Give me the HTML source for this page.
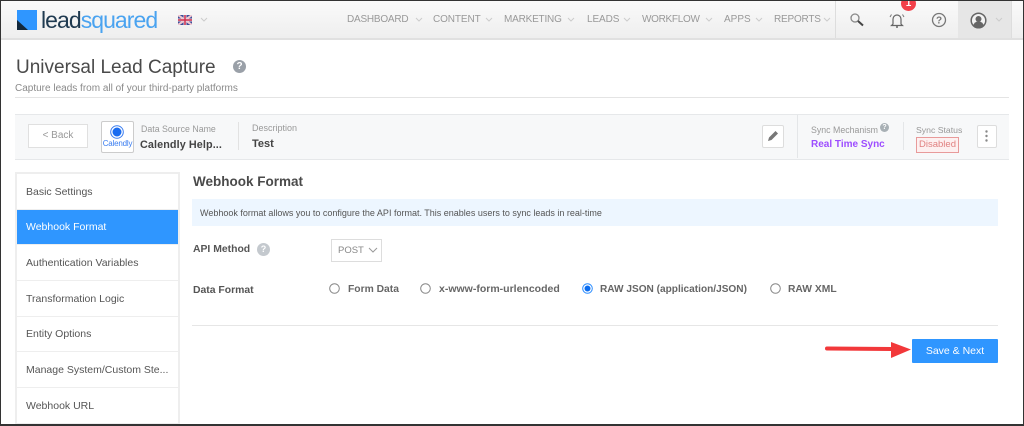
<!DOCTYPE html>
<html><head><meta charset="utf-8"><style>
html,body{margin:0;padding:0;background:#fff}
body{width:1024px;height:426px;position:relative;overflow:hidden;font-family:"Liberation Sans",sans-serif;color:#444}
#w{position:absolute;left:0;top:0;width:1024px;height:426px;overflow:hidden;filter:blur(.3px)}
.a{position:absolute;white-space:nowrap}
.nav{top:13px;font-size:10px;color:#999;line-height:13px}
.side{position:absolute;left:17px;width:161px;background:#fff;font-size:10.5px;color:#555;text-indent:9px}
.l{top:283px;font-size:10.3px;line-height:13px;font-weight:bold;color:#666}
</style></head><body><div id="w">
<div class="a" style="left:0;top:0;width:1024px;height:38px;background:linear-gradient(#fafafa,#eee);border-bottom:2px solid #e0e0e0"></div>
<svg class="a" style="left:17px;top:10px" width="20" height="20"><rect width="20" height="20" fill="#2f96ff"/><path d="M0 10L11 20H0Z" fill="#13283c"/></svg>
<div class="a" style="left:41px;top:6px;font-size:23px;line-height:28px;color:#1f3a50;letter-spacing:-.95px">lead<span style="color:#4aa3f0">squared</span></div>
<svg class="a" style="left:178px;top:15px" width="14" height="10"><rect width="14" height="10" fill="#3d4f9a"/><path d="M0 0L14 10M14 0L0 10" stroke="#f0c8d0" stroke-width="2"/><path d="M7 0V10M0 5H14" stroke="#e6d0d8" stroke-width="3"/><path d="M7 0V10M0 5H14" stroke="#d03050" stroke-width="1.5"/></svg>
<svg class="a" style="left:200px;top:17px" width="8" height="6"><path d="M1 1L4 4L7 1" fill="none" stroke="#ccc"/></svg>
<div class="a nav" style="left:347px;letter-spacing:-.22px">DASHBOARD</div><svg class="a" style="left:415px;top:17px" width="8" height="6"><path d="M1 1L4 4L7 1" fill="none" stroke="#ccc"/></svg>
<div class="a nav" style="left:433px;letter-spacing:-.1px">CONTENT</div><svg class="a" style="left:485px;top:17px" width="8" height="6"><path d="M1 1L4 4L7 1" fill="none" stroke="#ccc"/></svg>
<div class="a nav" style="left:504px;letter-spacing:-.2px">MARKETING</div><svg class="a" style="left:567px;top:17px" width="8" height="6"><path d="M1 1L4 4L7 1" fill="none" stroke="#ccc"/></svg>
<div class="a nav" style="left:587px;letter-spacing:-.1px">LEADS</div><svg class="a" style="left:623px;top:17px" width="8" height="6"><path d="M1 1L4 4L7 1" fill="none" stroke="#ccc"/></svg>
<div class="a nav" style="left:642px;letter-spacing:-.3px">WORKFLOW</div><svg class="a" style="left:705px;top:17px" width="8" height="6"><path d="M1 1L4 4L7 1" fill="none" stroke="#ccc"/></svg>
<div class="a nav" style="left:724px">APPS</div><svg class="a" style="left:755px;top:17px" width="8" height="6"><path d="M1 1L4 4L7 1" fill="none" stroke="#ccc"/></svg>
<div class="a nav" style="left:774px;letter-spacing:-.2px">REPORTS</div><svg class="a" style="left:823px;top:17px" width="8" height="6"><path d="M1 1L4 4L7 1" fill="none" stroke="#ccc"/></svg>
<div class="a" style="left:835px;top:1px;width:1px;height:37px;background:#ddd"></div>
<svg class="a" style="left:849px;top:12px" width="16" height="16"><circle cx="6" cy="6" r="4" fill="none" stroke="#888" stroke-width="1.3"/><path d="M9 9L14 13.5" stroke="#444" stroke-width="2"/></svg>
<svg class="a" style="left:889px;top:11px" width="16" height="18"><path d="M4 13V8a4 4 0 0 1 8 0V13L13.5 14.500H2.500Z" fill="none" stroke="#666" stroke-width="1.200"/><path d="M7 16H9" stroke="#666" stroke-width="1.500"/><path d="M2.500 3.500L1 6M13.500 3.500L15 6" stroke="#777"/></svg>
<div class="a" style="left:901px;top:-4px;width:15px;height:15px;border-radius:8px;background:#f2404a;color:#fff;font-size:10px;font-weight:bold;line-height:15px;text-align:center">1</div>
<svg class="a" style="left:931px;top:12px" width="16" height="16"><circle cx="8" cy="8" r="6.500" fill="none" stroke="#777" stroke-width="1.300"/><text x="8" y="11.500" font-family="Liberation Sans" font-size="10" font-weight="bold" fill="#777" text-anchor="middle">?</text></svg>
<div class="a" style="left:958px;top:1px;width:53px;height:37px;background:#e6e6e6;border-right:1px solid #ddd"></div>
<svg class="a" style="left:970px;top:12px" width="17" height="17"><circle cx="8.500" cy="8.500" r="7.300" fill="#f3f3f3" stroke="#666" stroke-width="1.500"/><circle cx="8.500" cy="7" r="3" fill="#666"/><path d="M3.500 13.500a5 4 0 0 1 10 0a7 7 0 0 1-10 0Z" fill="#666"/></svg>
<svg class="a" style="left:995px;top:17px" width="8" height="6"><path d="M1 1L4 4L7 1" fill="none" stroke="#ccc"/></svg>

<div class="a" style="left:16px;top:57px;font-size:19px;line-height:22px;color:#4a4a4a">Universal Lead Capture</div>
<div class="a" style="left:233px;top:60px;width:13px;height:13px;border-radius:7px;background:#9aa0a8;color:#fff;font-size:10px;font-weight:bold;line-height:13px;text-align:center">?</div>
<div class="a" style="left:15px;top:83px;font-size:10px;line-height:12px;color:#8a8a8a">Capture leads from all of your third-party platforms</div>
<div class="a" style="left:15px;top:97px;width:994px;height:1px;background:#e4e4e4"></div>

<div class="a" style="left:15px;top:114px;width:994px;height:44px;background:#f7f8f9;border-top:1px solid #e6e8ea;border-bottom:1px solid #e6e8ea"></div>
<div class="a" style="left:28px;top:124px;width:58px;height:22px;background:#fff;border:1px solid #e0e0e0;font-size:10px;line-height:22px;color:#999;text-align:center">&lt; Back</div>
<div class="a" style="left:101px;top:121px;width:31px;height:30px;background:#fff;border:1px solid #ccc;border-radius:2px"></div>
<svg class="a" style="left:110px;top:125px" width="14" height="14"><circle cx="7" cy="7" r="6.300" fill="none" stroke="#3a7df0" stroke-width="1"/><circle cx="7" cy="7" r="4.500" fill="#1a6cf0"/></svg>
<div class="a" style="left:102px;top:139px;width:31px;text-align:center;font-size:8px;line-height:9px;color:#3a7df0;letter-spacing:-.2px">Calendly</div>
<div class="a" style="left:141px;top:124px;font-size:8.800px;line-height:11px;color:#999">Data Source Name</div>
<div class="a" style="left:140px;top:138px;font-size:10.800px;line-height:14px;font-weight:bold;color:#444;letter-spacing:.1px">Calendly Help...</div>
<div class="a" style="left:238px;top:122px;width:1px;height:28px;background:#e2e2e2"></div>
<div class="a" style="left:252px;top:123px;font-size:9px;line-height:11px;color:#999">Description</div>
<div class="a" style="left:252px;top:137px;font-size:11px;line-height:14px;font-weight:bold;color:#444">Test</div>
<div class="a" style="left:762px;top:125px;width:20px;height:21px;background:#fff;border:1px solid #ddd;border-radius:2px"></div>
<svg class="a" style="left:766px;top:129px" width="14" height="14"><path d="M2 12L3 8.500L9.500 2L12 4.500L5.500 11Z" fill="#777"/></svg>
<div class="a" style="left:797px;top:115px;width:1px;height:43px;background:#e4e6e8"></div>
<div class="a" style="left:811px;top:125px;font-size:8.800px;line-height:11px;color:#999">Sync Mechanism</div>
<div class="a" style="left:880px;top:123px;width:9px;height:9px;border-radius:5px;background:#a8b0b5;color:#fff;font-size:7px;font-weight:bold;line-height:9px;text-align:center">?</div>
<div class="a" style="left:811px;top:138px;font-size:10px;line-height:14px;font-weight:bold;color:#9d4dff">Real Time Sync</div>
<div class="a" style="left:903px;top:122px;width:1px;height:28px;background:#e4e6e8"></div>
<div class="a" style="left:916px;top:125px;font-size:8.700px;line-height:11px;color:#999">Sync Status</div>
<div class="a" style="left:916px;top:137px;width:41px;height:14px;background:#fdf0f0;border:1px solid #e89a9a;font-size:9.500px;line-height:14px;color:#e08080;text-align:center">Disabled</div>
<div class="a" style="left:977px;top:125px;width:18px;height:21px;background:#fff;border:1px solid #ddd;border-radius:2px"></div>
<svg class="a" style="left:984px;top:129px" width="5" height="15"><circle cx="2.500" cy="2.500" r="1.200" fill="#888"/><circle cx="2.500" cy="7" r="1.200" fill="#888"/><circle cx="2.500" cy="11.500" r="1.200" fill="#888"/></svg>

<div class="a" style="left:15px;top:172px;width:165px;height:254px;background:#eee"></div>
<div class="side" style="top:174px;height:35px;line-height:36px">Basic Settings</div>
<div class="side" style="top:210px;height:34px;line-height:35px;background:#2f96ff;color:#fff">Webhook Format</div>
<div class="side" style="top:245px;height:35px;line-height:36px">Authentication Variables</div>
<div class="side" style="top:281px;height:35px;line-height:36px">Transformation Logic</div>
<div class="side" style="top:317px;height:34px;line-height:35px">Entity Options</div>
<div class="side" style="top:352px;height:35px;line-height:36px">Manage System/Custom Ste...</div>
<div class="side" style="top:388px;height:35px;line-height:36px">Webhook URL</div>

<div class="a" style="left:193px;top:173px;font-size:13.500px;line-height:17px;font-weight:bold;color:#4a4a4a">Webhook Format</div>
<div class="a" style="left:192px;top:199px;width:806px;height:27px;background:#edf6ff"></div>
<div class="a" style="left:200px;top:207px;font-size:9px;line-height:12px;color:#555">Webhook format allows you to configure the API format. This enables users to sync leads in real-time</div>
<div class="a" style="left:193px;top:243px;font-size:10.400px;line-height:14px;font-weight:bold;color:#555">API Method</div>
<div class="a" style="left:257px;top:243px;width:13px;height:13px;border-radius:7px;background:#c4c9ce;color:#fff;font-size:9px;font-weight:bold;line-height:13px;text-align:center">?</div>
<div class="a" style="left:331px;top:239px;width:49px;height:21px;border:1px solid #ddd;background:#fff;font-size:9.500px;line-height:22px;color:#888;text-indent:6px">POST</div>
<svg class="a" style="left:368px;top:247px" width="10" height="6"><path d="M1 1L5 5L9 1" fill="none" stroke="#999"/></svg>
<div class="a" style="left:193px;top:284px;font-size:10.400px;line-height:14px;font-weight:bold;color:#555">Data Format</div>
<svg class="a" style="left:329px;top:283px" width="11" height="11"><circle cx="5.500" cy="5.500" r="4.800" fill="#fff" stroke="#888"/></svg>
<div class="a l" style="left:348px">Form Data</div>
<svg class="a" style="left:420px;top:283px" width="11" height="11"><circle cx="5.500" cy="5.500" r="4.800" fill="#fff" stroke="#888"/></svg>
<div class="a l" style="left:439px;font-size:10.500px">x-www-form-urlencoded</div>
<svg class="a" style="left:582px;top:283px" width="11" height="11"><circle cx="5.500" cy="5.500" r="4.800" fill="#fff" stroke="#2f8fff"/><circle cx="5.500" cy="5.500" r="3" fill="#0a6cf0"/></svg>
<div class="a l" style="left:600px;font-size:10.100px">RAW JSON (application/JSON)</div>
<svg class="a" style="left:770px;top:283px" width="11" height="11"><circle cx="5.500" cy="5.500" r="4.800" fill="#fff" stroke="#888"/></svg>
<div class="a l" style="left:788px">RAW XML</div>
<div class="a" style="left:192px;top:325px;width:806px;height:1px;background:#e6e6e6"></div>
<div class="a" style="left:912px;top:339px;width:86px;height:24px;background:#2f96ff;border-radius:1px;color:#fff;font-size:10.500px;line-height:25px;text-align:center">Save &amp; Next</div>
<svg class="a" style="left:824px;top:340px" width="88" height="20"><path d="M3 8.500L69 9" stroke="#f2383a" stroke-width="4" stroke-linecap="round"/><path d="M67 2L87 9.500L67 18Z" fill="#f2383a"/></svg>

<div class="a" style="left:0;top:0;width:1024px;height:1px;background:#333"></div>
<div class="a" style="left:0;top:0;width:1px;height:426px;background:#333"></div>
<div class="a" style="left:1023px;top:0;width:1px;height:426px;background:#333"></div>
<div class="a" style="left:0;top:424px;width:1024px;height:2px;background:#333"></div>
</div></body></html>
